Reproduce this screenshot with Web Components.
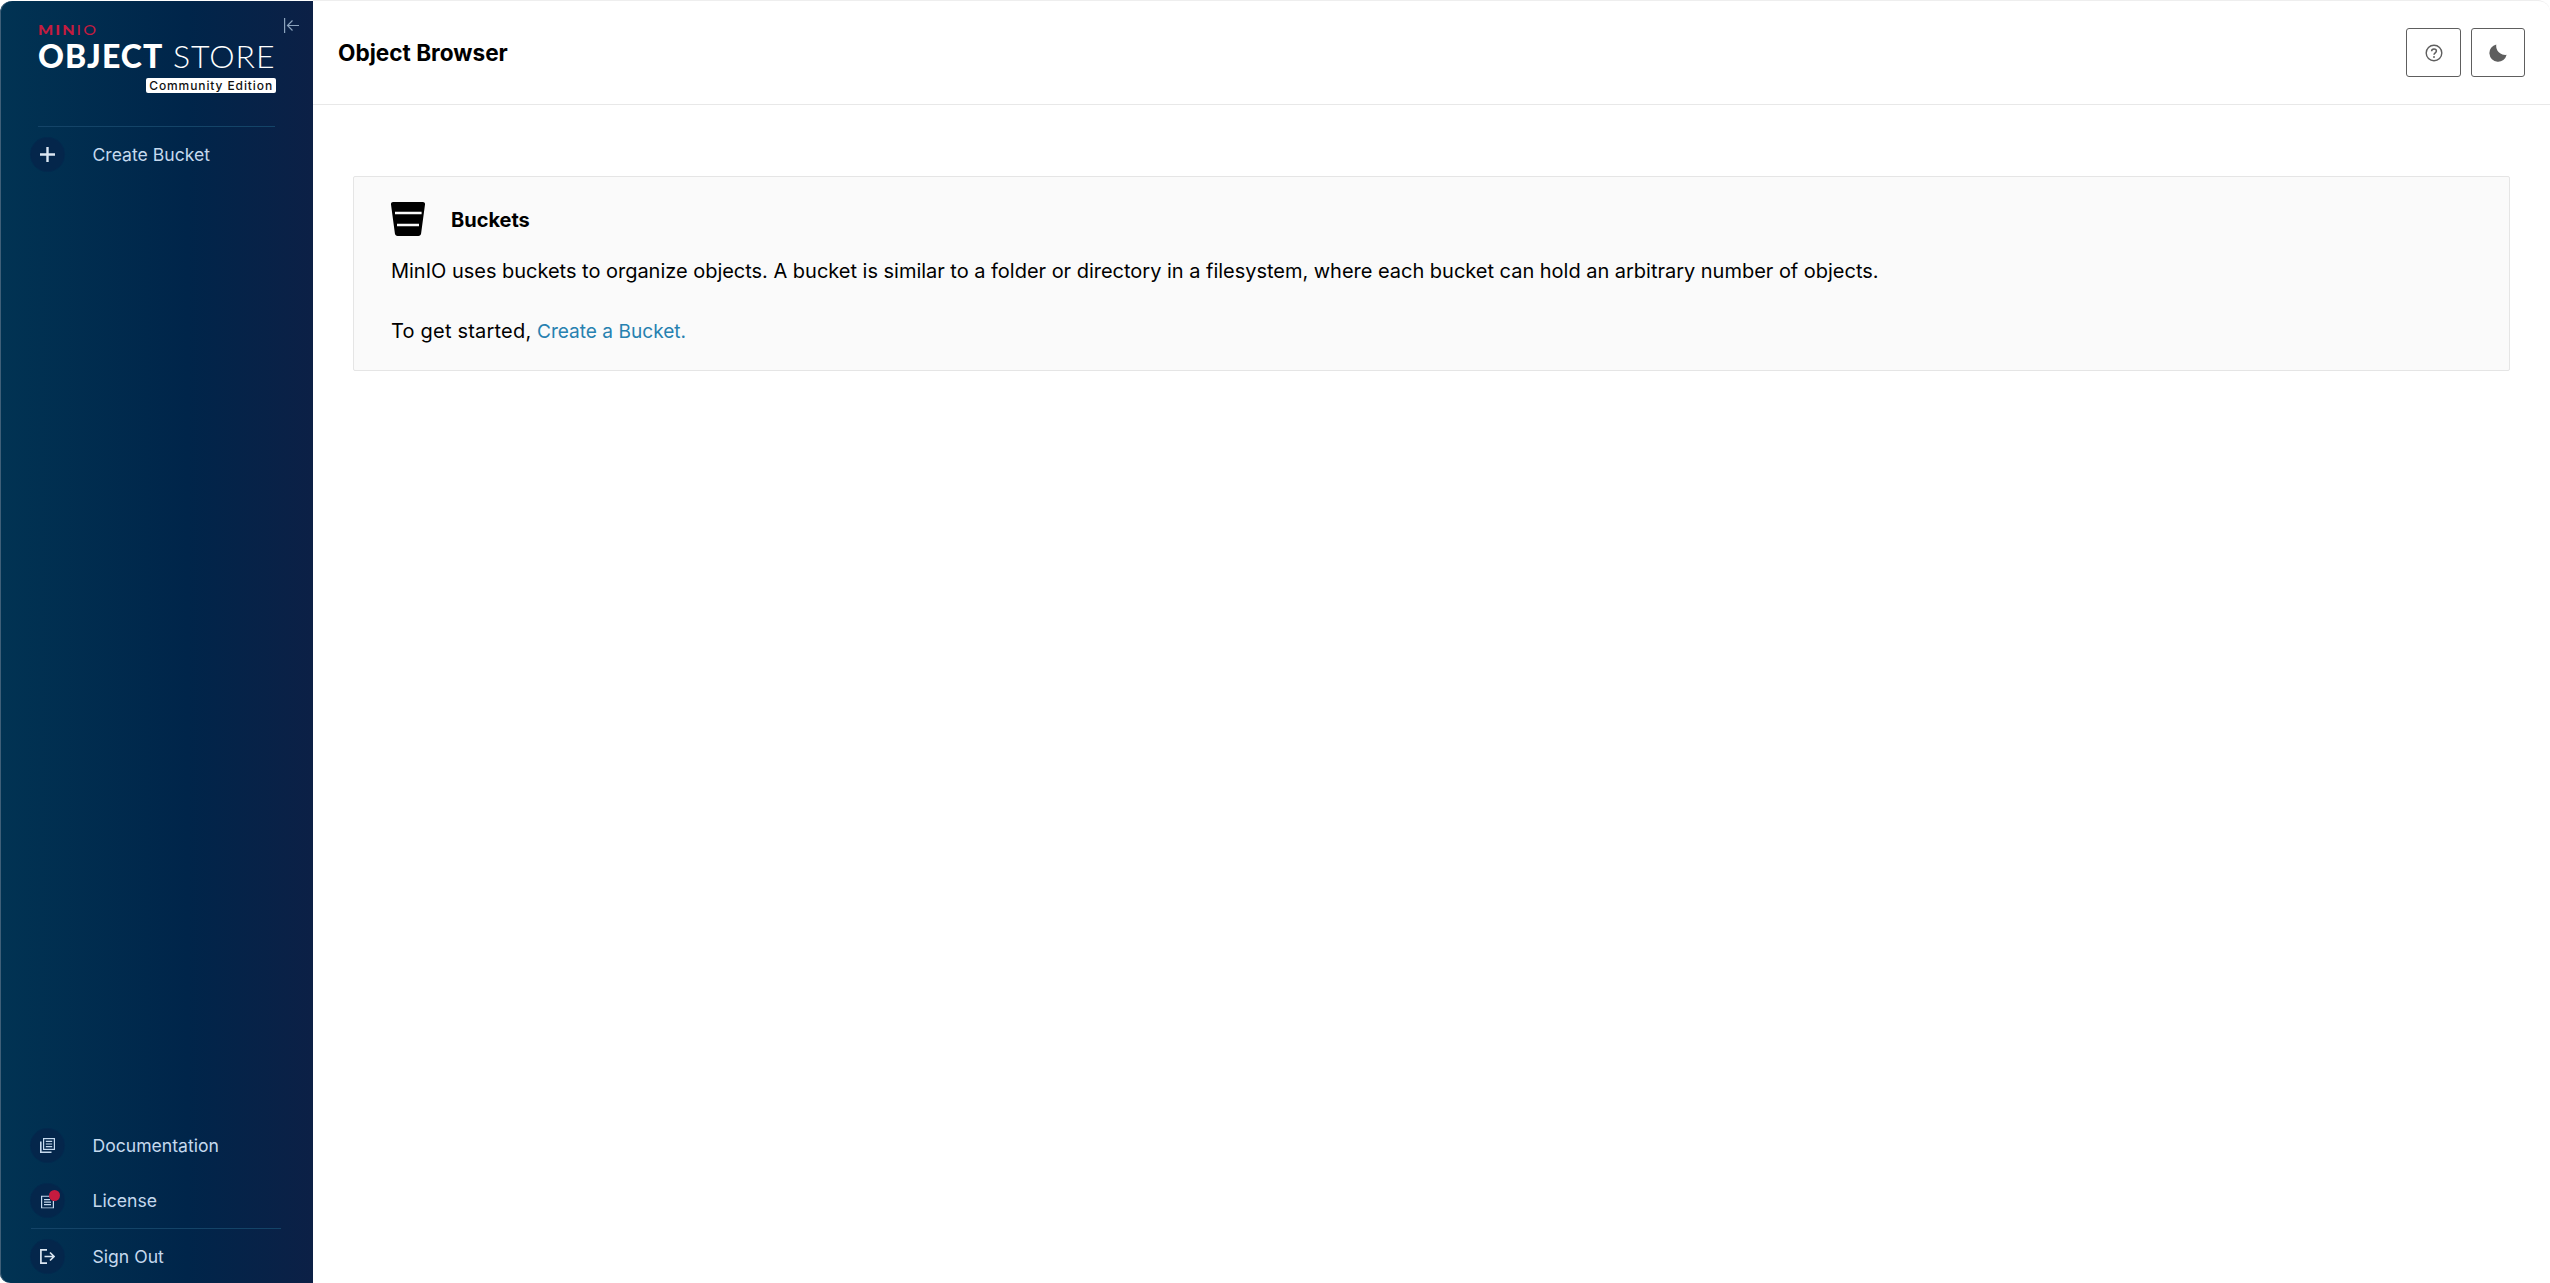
<!DOCTYPE html>
<html>
<head>
<meta charset="utf-8">
<title>Object Browser</title>
<style>
  html, body { margin: 0; height: 100%; background: #fff; }
  body { font-family: Inter, "Liberation Sans", sans-serif; }
</style>
</head>
<body>
<minio-app></minio-app>
<script>
class MinioLogo extends HTMLElement {
  connectedCallback() {
    this.attachShadow({ mode: 'open' });
    this.shadowRoot.innerHTML = `
      <style>
        :host { display: flex; flex-direction: column; width: 238px; }
        .brand { color: #c51b3f; font: 900 12.5px/14px Lato, sans-serif; letter-spacing: 1.6px; height: 13px; transform-origin: left top; transform: scaleX(1.28); white-space: nowrap; }
        .brand span { font-weight: 400; }
        .name { color: #fff; font: 900 32px/33px Lato, sans-serif; white-space: nowrap; margin-top: 2px; letter-spacing: 1px; }
        .name span { font-weight: 300; }
        .edition { align-self: flex-end; background: #fff; color: #111; border-radius: 2px; font: 500 12px/15px Inter, sans-serif; letter-spacing: .9px; padding: 0 3px; margin-top: 6px; white-space: nowrap; }
      </style>
      <div class="brand">MIN<span>IO</span></div>
      <div class="name">OBJECT<span> STORE</span></div>
      <div class="edition">Community Edition</div>
    `;
  }
}
customElements.define('minio-logo', MinioLogo);

class NavItem extends HTMLElement {
  connectedCallback() {
    this.attachShadow({ mode: 'open' });
    this.shadowRoot.innerHTML = `
      <style>
        :host { display: flex; align-items: center; height: 34px; color: #c5d9ee; font-size: 17.6px; position: relative; }
        .icon { width: 33px; height: 33px; margin-left: 31px; border-radius: 50%; background: #04264b; box-shadow: 0 0 0 1px #03294e; display: flex; align-items: center; justify-content: center; flex: none; position: relative; }
        .label { margin-left: 28.5px; white-space: nowrap; }
        ::slotted(svg) { display: block; }
        .dot { display: none; position: absolute; right: 4px; top: 6px; width: 11px; height: 11px; border-radius: 50%; background: #c51b3f; }
        :host([badge]) .dot { display: block; }
      </style>
      <div class="icon"><slot name="icon"></slot><span class="dot"></span></div>
      <span class="label"><slot></slot></span>
    `;
  }
}
customElements.define('nav-item', NavItem);

class SideBar extends HTMLElement {
  connectedCallback() {
    this.attachShadow({ mode: 'open' });
    this.shadowRoot.innerHTML = `
      <style>
        :host { display: flex; flex-direction: column; width: 313px; flex: none; height: calc(100% - 1px); margin-top: 1px; box-sizing: border-box; padding-top: 23px; padding-bottom: 9px; background: linear-gradient(90deg, #013353 0%, #00254a 60%, #0c2046 100%); border-radius: 12px 0 0 10px; position: relative; box-shadow: inset 1px 0 0 #3f5f78; }
        .collapse { position: absolute; left: 284px; top: 17px; }
        .logo { margin-left: 38px; }
        .rule { height: 1px; background: #144468; }
        .top { margin: 33px 0 0 38px; width: 237px; }
        .create { margin-top: 10px; }
        .spacer { flex: 1; }
        .bottom { display: flex; flex-direction: column; }
        .bottom ::slotted(nav-item) { margin-top: 21px; }
        .sep { margin: 11px 32px 0 31px; height: 1px; background: #144468; }
        .last { margin-top: 10px; padding-bottom: 1px; }
      </style>
      <svg class="collapse" width="15" height="15" viewBox="0 0 15 15" fill="none" stroke="#8ba3bd" stroke-width="1.2"><path d="M.6 0v15M15 7.5H3.5M8.5 2.5l-5 5 5 5"/></svg>
      <minio-logo class="logo"></minio-logo>
      <div class="rule top"></div>
      <div class="create"><slot name="create"></slot></div>
      <div class="spacer"></div>
      <div class="bottom"><slot name="links"></slot></div>
      <div class="sep"></div>
      <div class="last"><slot name="signout"></slot></div>
    `;
  }
}
customElements.define('side-bar', SideBar);

class PageHeader extends HTMLElement {
  connectedCallback() {
    this.attachShadow({ mode: 'open' });
    this.shadowRoot.innerHTML = `
      <style>
        :host { display: flex; align-items: center; justify-content: space-between; height: 103px; box-sizing: content-box; border-bottom: 1px solid #e8e8e8; border-top: 1px solid #eee; padding: 0 25px 0 25px; background: #fff; border-top-right-radius: 12px; }
        h1 { margin: 0; font-size: 22.6px; font-weight: 700; color: #000; }
        .actions { display: flex; gap: 10px; }
        button { width: 55px; height: 49px; box-sizing: border-box; border: 1px solid #5e5e5e; border-radius: 3px; background: #fff; padding: 0; display: flex; align-items: center; justify-content: center; }
        button + button { width: 54px; }
      </style>
      <h1><slot></slot></h1>
      <div class="actions">
        <button aria-label="Help"><svg width="18" height="18" viewBox="0 0 18 18" fill="none" stroke="#5e5e5e" stroke-width="1.4"><circle cx="9" cy="9" r="7.8"/><path d="M6.6 7.2c0-1.4 1.1-2.3 2.4-2.3s2.4.9 2.4 2.1c0 1.9-2.4 1.8-2.4 3.8" stroke-width="1.5"/><circle cx="9" cy="13" r=".95" fill="#5e5e5e" stroke="none"/></svg></button>
        <button aria-label="Dark mode"><svg width="18" height="18" viewBox="0 0 18 18"><path fill="#5e5e5e" d="M7.3.5A8.7 8.7 0 1 0 17.6 10.8 9 9 0 0 1 7.3.5Z"/></svg></button>
      </div>
    `;
  }
}
customElements.define('page-header', PageHeader);

class InfoCard extends HTMLElement {
  connectedCallback() {
    this.attachShadow({ mode: 'open' });
    this.shadowRoot.innerHTML = `
      <style>
        :host { display: block; background: #fafafa; border: 1px solid #e5e5e5; border-radius: 2px; padding: 25px 37px 24px; color: #000; font-size: 20px; line-height: 30px; letter-spacing: -0.02px; }
        .head { display: flex; align-items: center; height: 34px; gap: 26px; margin-bottom: 20px; }
        svg { display: block; flex: none; }
        .title { font-size: 20px; font-weight: 700; padding-top: 2px; }
        .body { white-space: nowrap; }
      </style>
      <div class="head">
        <svg width="34" height="34" viewBox="0 0 34 34"><path d="M2 0h30c1.3 0 2.2 1.1 2 2.4l-3.9 29.2c-.2 1.4-1.3 2.4-2.7 2.4H6.6c-1.4 0-2.5-1-2.7-2.4L0 2.4C-.2 1.1.7 0 2 0Z" fill="#000"/><path d="M4 11h26.6M6 23h22" stroke="#fafafa" stroke-width="2.5"/></svg>
        <span class="title"><slot name="title"></slot></span>
      </div>
      <div class="body"><slot></slot></div>
    `;
  }
}
customElements.define('info-card', InfoCard);

class MinioApp extends HTMLElement {
  connectedCallback() {
    this.attachShadow({ mode: 'open' });
    this.shadowRoot.innerHTML = `
      <style>
        :host { display: flex; height: 1283px; width: 2550px; overflow: hidden; }
        main { flex: 1; min-width: 0; }
        .content { padding: 71px 40px 0 40px; }
        .lead { letter-spacing: .2px; }
        a { color: #2781b0; text-decoration: none; font-size: 19.1px; letter-spacing: 0; }
        svg { display: block; }
        .license { transform: translateY(1.5px); }
      </style>
      <side-bar>
        <nav-item slot="create">
          <svg slot="icon" width="15" height="15" viewBox="0 0 15 15" fill="none" stroke="#dbe6f2" stroke-width="2.4"><path d="M7.5 0v15M0 7.5h15"/></svg>
          Create Bucket
        </nav-item>
        <nav-item slot="links">
          <svg slot="icon" width="15" height="15" viewBox="0 0 15 15" fill="none" stroke="#c5d9ee" stroke-width="1.2"><rect x="3.6" y=".6" width="10.8" height="10.8"/><path d="M5.8 3.4h6.4M5.8 6h6.4M5.8 8.6h6.4"/><path d="M.8 3.5v10.7h10.7" stroke-width="1.6"/></svg>
          Documentation
        </nav-item>
        <nav-item slot="links" badge>
          <svg slot="icon" class="license" width="13" height="13" viewBox="0 0 13 13" fill="none" stroke="#c5d9ee" stroke-width="1.2"><path d="M12.4 5.5v7H.6V.6h8"/><path d="M3 4.2h6M3 6.7h7M3 9.2h7"/></svg>
          License
        </nav-item>
        <nav-item slot="signout">
          <svg slot="icon" width="15" height="15" viewBox="0 0 15 15" fill="none" stroke="#dbe6f2" stroke-width="1.7"><path d="M7 .9H.9v13.2H7"/><path d="M4.5 7.5h9.5M10 3.5l4 4-4 4"/></svg>
          Sign Out
        </nav-item>
      </side-bar>
      <main>
        <page-header>Object Browser</page-header>
        <div class="content">
          <info-card>
            <span slot="title">Buckets</span>
            MinIO uses buckets to organize objects. A bucket is similar to a folder or directory in a filesystem, where each bucket can hold an arbitrary number of objects.<br><br>
            <span class="lead">To get started,</span> <a href="#">Create a Bucket.</a>
          </info-card>
        </div>
      </main>
    `;
  }
}
customElements.define('minio-app', MinioApp);
</script>
</body>
</html>
